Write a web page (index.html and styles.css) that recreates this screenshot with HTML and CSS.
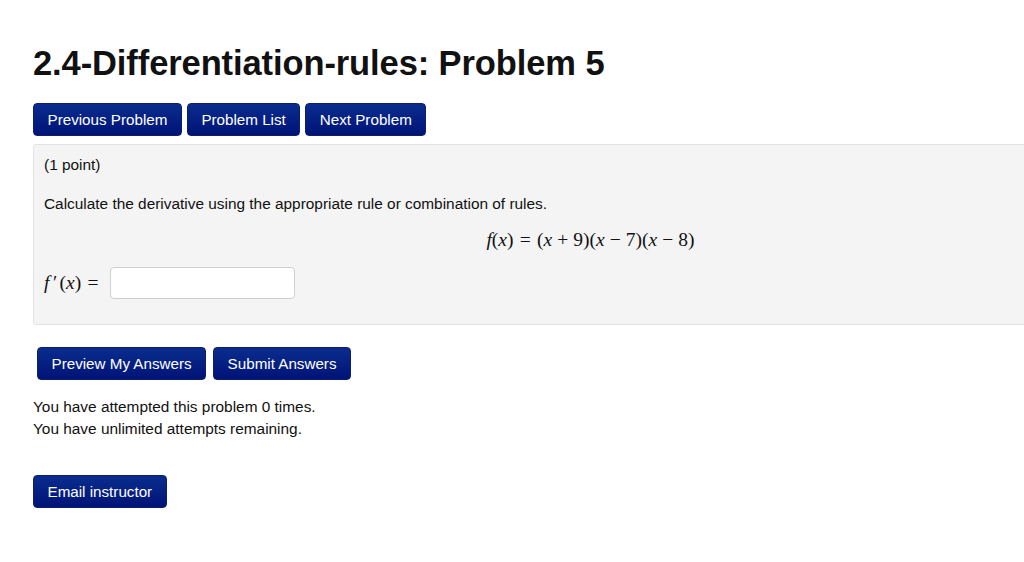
FILE: index.html
```html
<!DOCTYPE html>
<html lang="en">
<head>
    <meta charset="UTF-8" />
    <title>2.4-Differentiation-rules: Problem 5</title>
    <link rel="stylesheet" href="styles.css">
</head>
<body>
    <h1>2.4-Differentiation-rules: Problem 5</h1>

    <div class="nav-buttons">
      <button class="btn">Previous Problem</button>
      <button class="btn">Problem List</button>
      <button class="btn">Next Problem</button>
    </div>

    <div class="problem">
      <p class="points">(1 point)</p>
      <p class="question">Calculate the derivative using the appropriate rule or combination of rules.</p>
      <div class="display-math"><i>f</i>(<i>x</i>)<span class="rel">=</span>(<i>x</i><span class="op">+</span>9)(<i>x</i><span class="op">&minus;</span>7)(<i>x</i><span class="op">&minus;</span>8)</div>
      <div class="answer-row">
        <span class="math"><i>f</i><span class="prime">&prime;</span>(<i>x</i>)<span class="rel">=</span></span>
        <input type="text" class="answer" />
      </div>
    </div>

    <div class="submit-buttons">
      <button class="btn">Preview My Answers</button>
      <button class="btn">Submit Answers</button>
    </div>

    <div class="attempts">
      <p>You have attempted this problem 0 times.</p>
      <p>You have unlimited attempts remaining.</p>
    </div>

    <button class="btn email">Email instructor</button>
</body>
</html>
```

FILE: styles.css
```css
html, body {
  overflow: hidden;
}
body {
  font-family: "Liberation Sans", Arial, sans-serif;
  font-size: 15.4px;
  color: #111;
  margin: 0;
  padding: 0 0 0 33px;
  background: #fff;
}
h1 {
  font-size: 34.5px;
  font-weight: bold;
  margin: 44px 0 0;
  line-height: 38px;
  letter-spacing: -0.1px;
}
.nav-buttons {
  display: flex;
  gap: 5px;
  margin-top: 21px;
}
.btn {
  font-family: "Liberation Sans", Arial, sans-serif;
  font-size: 15.2px;
  color: #fff;
  background: linear-gradient(#0a2c8e, #001377);
  border: 1px solid #0b1f6a;
  border-radius: 4px;
  height: 33px;
  padding: 0 13.5px;
  cursor: pointer;
}
.problem {
  width: 1115px;
  margin-top: 8px;
  background: #f4f4f4;
  border: 1px solid #e3e3e3;
  border-radius: 3px;
  padding: 0 10px;
  box-sizing: border-box;
  height: 181px;
}
.problem p {
  margin: 0;
}
.points {
  padding-top: 11px;
  line-height: 18px;
}
.question {
  margin-top: 21px !important;
  line-height: 18px;
}
.display-math {
  font-family: "Liberation Serif", "Times New Roman", serif;
  font-size: 19.5px;
  text-align: center;
  margin-top: 17px;
  line-height: 20px;
}
.rel {
  padding: 0 0.32em;
}
.op {
  padding: 0 0.26em;
}
.prime {
  padding: 0 0.12em 0 0.18em;
}
.answer-row {
  display: flex;
  align-items: center;
  margin-top: 17px;
  gap: 0;
}
.math {
  font-family: "Liberation Serif", "Times New Roman", serif;
  font-size: 19.5px;
  margin-right: 12px;
}
.math .rel {
  padding-right: 0;
}
.answer {
  width: 185px;
  height: 32px;
  box-sizing: border-box;
  border: 1px solid #cfcfcf;
  border-radius: 4px;
  background: #fff;
}
.submit-buttons {
  display: flex;
  gap: 7px;
  margin: 22px 0 0 4px;
}
.attempts {
  margin-top: 16px;
}
.attempts p {
  margin: 0;
  line-height: 22px;
}
.email {
  margin-top: 35px;
}
```
